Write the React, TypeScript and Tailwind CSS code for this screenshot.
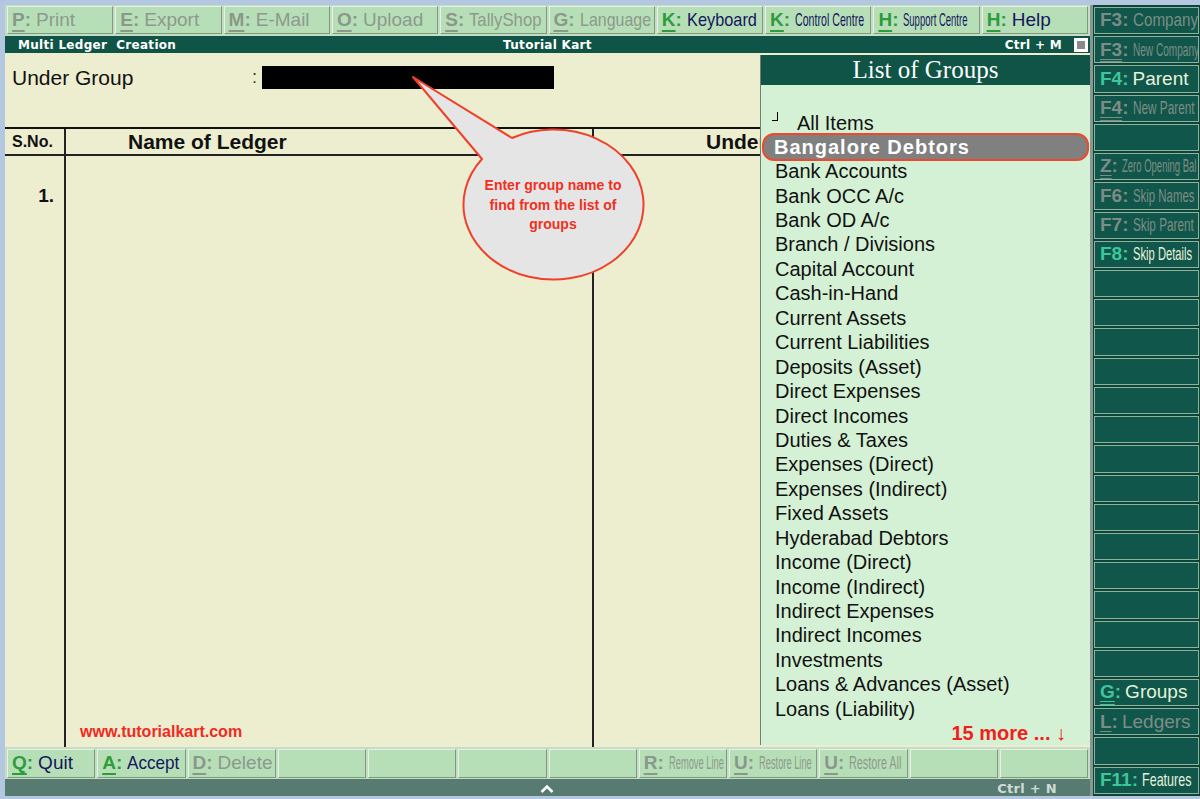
import React from "react";

type Key = { k?: string; l?: string; on?: boolean; sq?: string; u?: boolean };

const topBtns: Key[] = [
  { k: "P", l: "Print" },
  { k: "E", l: "Export" },
  { k: "M", l: "E-Mail" },
  { k: "O", l: "Upload" },
  { k: "S", l: "TallyShop", sq: "scale-x-[0.88]" },
  { k: "G", l: "Language", sq: "scale-x-[0.84]" },
  { k: "K", l: "Keyboard", on: true, sq: "scale-x-[0.86]" },
  { k: "K", l: "Control Centre", on: true, sq: "scale-x-[0.56]" },
  { k: "H", l: "Support Centre", on: true, sq: "scale-x-[0.5]" },
  { k: "H", l: "Help", on: true },
];

const bottomBtns: Key[] = [
  { k: "Q", l: "Quit", on: true },
  { k: "A", l: "Accept", on: true, sq: "scale-x-[0.9]" },
  { k: "D", l: "Delete" },
  {},
  {},
  {},
  {},
  { k: "R", l: "Remove Line", sq: "scale-x-[0.49]" },
  { k: "U", l: "Restore Line", sq: "scale-x-[0.49]" },
  { k: "U", l: "Restore All", sq: "scale-x-[0.57]" },
  {},
  {},
];

const side: Key[] = [
  { k: "F3", l: "Company", sq: "scale-x-[0.8]" },
  { k: "F3", l: "New Company", u: true, sq: "scale-x-[0.53]" },
  { k: "F4", l: "Parent", on: true },
  { k: "F4", l: "New Parent", u: true, sq: "scale-x-[0.62]" },
  {},
  { k: "Z", l: "Zero Opening Bal", u: true, sq: "scale-x-[0.5]" },
  { k: "F6", l: "Skip Names", sq: "scale-x-[0.6]" },
  { k: "F7", l: "Skip Parent", sq: "scale-x-[0.62]" },
  { k: "F8", l: "Skip Details", on: true, sq: "scale-x-[0.59]" },
  {}, {}, {}, {}, {}, {}, {}, {}, {}, {}, {}, {}, {}, {},
  { k: "G", l: "Groups", on: true, u: true },
  { k: "L", l: "Ledgers", u: true },
  {},
  { k: "F11", l: "Features", on: true, sq: "scale-x-[0.66]" },
];

const groups = [
  "Bank Accounts",
  "Bank OCC A/c",
  "Bank OD A/c",
  "Branch / Divisions",
  "Capital Account",
  "Cash-in-Hand",
  "Current Assets",
  "Current Liabilities",
  "Deposits (Asset)",
  "Direct Expenses",
  "Direct Incomes",
  "Duties & Taxes",
  "Expenses (Direct)",
  "Expenses (Indirect)",
  "Fixed Assets",
  "Hyderabad Debtors",
  "Income (Direct)",
  "Income (Indirect)",
  "Indirect Expenses",
  "Indirect Incomes",
  "Investments",
  "Loans & Advances (Asset)",
  "Loans (Liability)",
];

const btnBase =
  "h-full min-w-0 bg-[#b7dfb7] border border-t-[#e4f3e4] border-l-[#e4f3e4] border-b-[#7b9c7b] border-r-[#7b9c7b] flex items-center pl-[4px] text-[19px] overflow-hidden whitespace-nowrap";

function BarButton({ b }: { b: Key }) {
  if (!b.k) return <div className={btnBase} />;
  const keyCls = b.on ? "text-[#2f9c3c]" : "text-[#8b978b]";
  const lblCls = b.on ? "text-[#16165e]" : "text-[#8d998d]";
  return (
    <div className={btnBase}>
      <span className={`font-bold underline decoration-2 underline-offset-4 ${keyCls}`}>{b.k}</span>
      <span className={`font-bold ${keyCls}`}>:</span>
      <span className={`ml-[5px] inline-block origin-left ${lblCls} ${b.sq ?? ""}`}>{b.l}</span>
    </div>
  );
}

function SideRow({ s }: { s: Key }) {
  const row =
    "flex-1 min-h-0 m-[1px] border border-[#8db29d] bg-[#10564a] flex items-center pl-[5px] overflow-hidden whitespace-nowrap";
  if (!s.k) return <div className={row} />;
  const keyCls = s.on ? "text-[#3cc79b]" : "text-[#7d8d85]";
  const lblCls = s.on ? "text-[#e6f2dc]" : "text-[#7d8d85]";
  return (
    <div className={row}>
      <span
        className={`font-bold text-[19px] ${keyCls} ${s.u ? "underline decoration-double underline-offset-[3px]" : ""}`}
      >
        {s.k}
      </span>
      <span className={`font-bold text-[19px] ${keyCls}`}>:</span>
      <span className={`ml-[4px] inline-block origin-left text-[19px] ${lblCls} ${s.sq ?? ""}`}>{s.l}</span>
    </div>
  );
}

export default function App() {
  return (
    <div className="w-[1200px] h-[799px] bg-[#b3c7e1] flex pt-[5px] pb-[3px] pl-[5px] overflow-hidden font-['Liberation_Sans',Arial,sans-serif]">
      {/* main window */}
      <div className="w-[1085px] flex flex-col">
        {/* top buttons */}
        <div className="h-[31px] grid grid-cols-10 gap-[2px] px-[2px] pt-[1px] pb-[2px] bg-[#c6dcc6]">
          {topBtns.map((b, i) => (
            <BarButton key={i} b={b} />
          ))}
        </div>

        {/* title */}
        <div className="h-[17px] bg-[#0f5446] grid grid-cols-3 items-center text-white text-[12px] tracking-[0.3px] font-bold font-['DejaVu_Sans',sans-serif]">
          <div className="pl-[13px] whitespace-pre">Multi Ledger  Creation</div>
          <div className="text-center">Tutorial Kart</div>
          <div className="flex justify-end items-center pr-[2px]">
            <span className="mr-[12px]">Ctrl + M</span>
            <span className="w-[14px] h-[14px] bg-white flex items-center justify-center">
              <span className="w-[8px] h-[8px] bg-[#8a8a8a]" />
            </span>
          </div>
        </div>

        {/* content */}
        <div className="flex-1 relative bg-[#ededcf] flex flex-col">
          <div className="h-[74px] flex items-start pt-[13px] pl-[7px]">
            <div className="flex items-center h-[23px]">
              <span className="w-[240px] text-[21px] text-[#111]">Under Group</span>
              <span className="text-[18px] text-[#333]">:</span>
              <span className="ml-[5px] w-[292px] h-[23px] bg-black" />
            </div>
          </div>

          <div className="flex-1 border-t-2 border-[#111] grid grid-cols-[61px_528px_1fr] grid-rows-[27px_1fr]">
            <div className="border-r-2 border-b-2 border-[#222] flex items-center pl-[7px] text-[16px] font-bold text-[#111]">
              S.No.
            </div>
            <div className="border-r-2 border-b-2 border-[#222] flex items-center pl-[62px] text-[21px] font-bold text-[#111]">
              Name of Ledger
            </div>
            <div className="border-b-2 border-[#222] flex items-center pl-[112px] text-[21px] font-bold text-[#111]">
              Under Group
            </div>
            <div className="border-r-2 border-[#222] text-right pr-[10px] pt-[26px] text-[19px] font-bold text-[#111]">
              1.
            </div>
            <div className="border-r-2 border-[#222]" />
            <div />
          </div>

          <div className="absolute left-[75px] bottom-[3px] text-[16px] font-bold text-[#f02a1e]">
            www.tutorialkart.com
          </div>

          {/* callout */}
          <svg className="absolute left-0 top-0 pointer-events-none" width="700" height="300">
            <path
              d="M408 24 L507 85 A90 75 0 1 1 477 106 Z"
              fill="#e5e5e5"
              stroke="#f0402a"
              strokeWidth="2"
              strokeLinejoin="round"
            />
          </svg>
          <div className="absolute left-[458px] top-[123px] w-[180px] text-center text-[14px] leading-[19.5px] font-bold text-[#f0301e]">
            Enter group name to
            <br />
            find from the list of
            <br />
            groups
          </div>

          {/* list of groups */}
          <div className="absolute right-0 top-[2px] w-[330px] h-[690px] border-l border-[#6f806f] bg-[#d5f1d5] flex flex-col overflow-hidden">
            <div className="h-[30px] shrink-0 bg-[#0f5446] text-white text-center text-[25px] leading-[30px] font-['Liberation_Serif',serif]">
              List of Groups
            </div>
            <div className="h-[25.3px] shrink-0" />
            <div className="h-[24.45px] shrink-0 flex items-center text-[20px] text-[#111]">
              <span className="ml-[11px] w-[6px] h-[9px] border-r-[1.5px] border-b-[1.5px] border-black relative -top-[6px]" />
              <span className="ml-[19px]">All Items</span>
            </div>
            <div className="h-[24.45px] shrink-0 relative">
              <div className="absolute -top-[2px] -bottom-[2px] left-[1px] right-[1px] bg-[#808080] border-2 border-[#f0482c] rounded-[12px]" />
              <div className="relative pl-[13px] leading-[24.45px] text-[20px] font-bold tracking-[1px] text-white">
                Bangalore Debtors
              </div>
            </div>
            {groups.map((g) => (
              <div
                key={g}
                className="h-[24.45px] shrink-0 leading-[24.45px] pl-[14px] text-[20px] text-[#111] whitespace-nowrap"
              >
                {g}
              </div>
            ))}
            <div className="flex-1 min-h-0 leading-[24px] text-right pr-[24px] text-[20px] text-[#f0201a]">
              <span className="font-bold">15 more ... </span>
              <span>↓</span>
            </div>
          </div>
        </div>

        {/* bottom buttons */}
        <div className="h-[32px] grid grid-cols-12 gap-[2px] px-[2px] pt-[2px] pb-[1px] bg-[#c6dcc6]">
          {bottomBtns.map((b, i) => (
            <BarButton key={i} b={b} />
          ))}
        </div>

        {/* status */}
        <div className="h-[17px] bg-[#577a71] grid grid-cols-3 items-center">
          <div />
          <div className="flex justify-center">
            <svg width="14" height="9" viewBox="0 0 14 9">
              <path d="M1.5 8 L7 2.5 L12.5 8" fill="none" stroke="#ffffff" strokeWidth="2.6" />
            </svg>
          </div>
          <div className="text-right pr-[33px] text-[13px] tracking-[0.3px] font-bold text-[#cfdcd5] font-['DejaVu_Sans',sans-serif]">
            Ctrl + N
          </div>
        </div>
      </div>

      {/* separator */}
      <div className="w-[3px] bg-[#8a9691]" />

      {/* right sidebar */}
      <div className="w-[107px] flex flex-col bg-[#0c4538] py-[1px]">
        {side.map((s, i) => (
          <SideRow key={i} s={s} />
        ))}
      </div>
    </div>
  );
}
